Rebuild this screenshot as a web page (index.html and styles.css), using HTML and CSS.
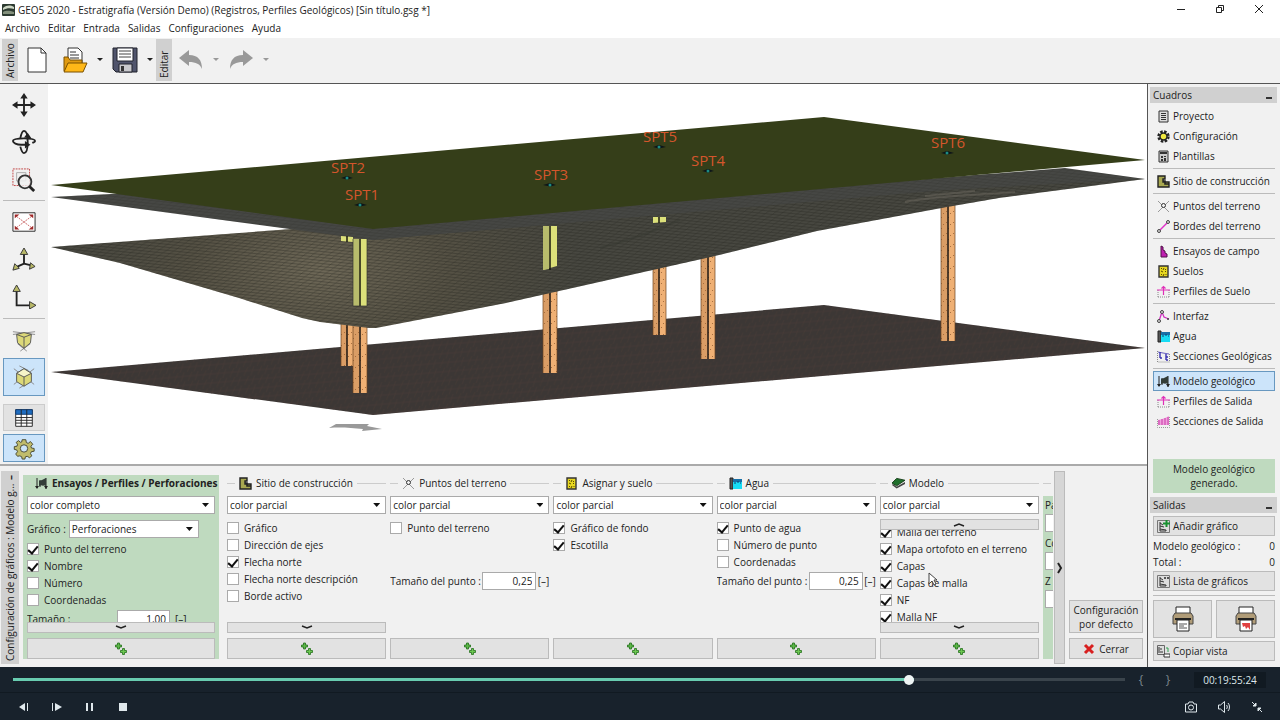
FILE: index.html
```html
<!DOCTYPE html>
<html lang="es">
<head>
    <meta charset="UTF-8">
    <meta name="viewport" content="width=device-width, initial-scale=1.0">
    <title>GEO5 2020 - Estratigrafía</title>
    <link rel="stylesheet" href="styles.css">
</head>
<body>
    <!-- shared icons -->
    <svg class="defs" aria-hidden="true">
        <symbol id="i-add" viewBox="0 0 14 14">
            <path d="M3.500 1h2v2h2v2h-2v2h-2V5h-2V3h2z" fill="#5cb848" stroke="#23701c" stroke-width=".800"/>
            <path d="M8.500 6.500h2v2h2v2h-2v2h-2v-2h-2v-2h2z" fill="#6cc850" stroke="#23701c" stroke-width=".800"/>
        </symbol>
        <symbol id="i-site" viewBox="0 0 13 13">
            <path d="M1 1h7v3H6v3h6v5H1z" fill="#a8a850" stroke="#222" stroke-width="1.4"/>
            <path d="M6 6h2v3h4" fill="none" stroke="#222" stroke-width="1.6"/>
        </symbol>
        <symbol id="i-points" viewBox="0 0 13 13">
            <path d="M1 1l11 11M12 1L1 12" stroke="#999"/>
            <circle cx="6.500" cy="5.500" r="2" fill="#f1f1f1" stroke="#333"/>
        </symbol>
        <symbol id="i-soil" viewBox="0 0 13 13">
            <path d="M2 1h9v11H2z" fill="#e8d820" stroke="#333" stroke-width="1.400"/>
            <path d="M4 3l1 1M7 3l-1 2M9 4l-1 1M4 6l2 1M8 7l1-1M4 9l1 1M7 9l-1 2M9 9v1" stroke="#5a4a00"/>
        </symbol>
        <symbol id="i-water" viewBox="0 0 13 13">
            <path d="M1 1h3v11H1z" fill="#555" stroke="#222"/>
            <path d="M4 5h9v7H4z" fill="#18dcf4"/>
            <path d="M4 2h9v3H4z" fill="#1870a8"/>
            <path d="M5 6h2M8 5h2M11 6h1" stroke="#0a3c70"/>
        </symbol>
        <symbol id="i-model" viewBox="0 0 13 13">
            <path d="M2 1v10M5 3v7M8 3v6M11 1v11" stroke="#222"/>
            <path d="M4 4l3-1 4-2v8L8 8 4 9z" fill="#333d38"/>
            <path d="M0 9l2 3 2-3M9 9l2 3 2-3" fill="#222"/>
        </symbol>
        <symbol id="i-graph" viewBox="0 0 13 13">
            <path d="M.5.500h12v12H.500z" fill="#ddd" stroke="#777"/>
            <path d="M3 2v9M3 3l3 2M3 6l4 1M3 9l6 1v1H3" stroke="#333" fill="none"/>
        </symbol>
        <symbol id="i-profile" viewBox="0 0 13 13">
            <path d="M1 12V4M12 12V4M1 12h11" stroke="#888" stroke-dasharray="1 1" fill="none"/>
            <path d="M0 5h13M6.500 2v8M4.500 3.500l2-2 2 2" stroke="#e030b8" fill="none" stroke-width="1.200"/>
        </symbol>
        <symbol id="i-printer" viewBox="0 0 22 26">
            <path d="M4 1h14v8H4z" fill="#fff" stroke="#222"/>
            <path d="M3 7h16l2 3v8H1v-8z" fill="#b09c78" stroke="#444"/>
            <path d="M3 12h16v2H3z" fill="#222"/>
            <path d="M5 14h12v11H5z" fill="#fff" stroke="#222"/>
        </symbol>
    </svg>

    <header class="titlebar">
        <svg class="app-icon" viewBox="0 0 13 12">
            <rect width="13" height="12" rx="1" fill="#2c3a30"/>
            <path d="M1 4c4-3 7-3 11-1v2c-4-1-7-1-11 1z" fill="#cdd6c4"/>
            <path d="M1 8c4-2 7-1 11 0v2H1z" fill="#83907c"/>
        </svg>
        <h1>GEO5 2020 - Estratigrafía (Versión Demo) (Registros, Perfiles Geológicos) [Sin título.gsg *]</h1>
        <div class="window-buttons">
            <button aria-label="Minimizar"><svg viewBox="0 0 10 10"><path d="M1 5.500h8"/></svg></button>
            <button aria-label="Restaurar"><svg viewBox="0 0 10 10"><path d="M1.500 3.500h5v5h-5zM3.500 3V1.500h5v5H7"/></svg></button>
            <button aria-label="Cerrar ventana"><svg viewBox="0 0 10 10"><path d="M1 1l8 8M9 1L1 9"/></svg></button>
        </div>
    </header>

    <nav class="menu">
        <a href="#">Archivo</a>
        <a href="#">Editar</a>
        <a href="#">Entrada</a>
        <a href="#">Salidas</a>
        <a href="#">Configuraciones</a>
        <a href="#">Ayuda</a>
    </nav>

    <div class="toolbar">
        <span class="tool-tab">Archivo</span>
        <button class="tool" aria-label="Nuevo">
            <svg width="20" height="26" viewBox="0 0 20 26"><path d="M1 1h13l5 5v19H1z" fill="#fff" stroke="#333"/><path d="M14 1v5h5" fill="none" stroke="#333"/></svg>
        </button>
        <button class="tool" aria-label="Abrir">
            <svg width="25" height="26" viewBox="0 0 25 26">
                <path d="M5 1h10l4 4v14H5z" fill="#fff" stroke="#333"/>
                <path d="M7 5h6M7 8h9M7 11h9" stroke="#333"/>
                <path d="M1 24V10h4l2 3h12v3" fill="#e09a10" stroke="#7a5000"/>
                <path d="M1 25l4-9h19l-4 9z" fill="#ffb818" stroke="#7a5000"/>
            </svg>
        </button>
        <button class="drop" aria-label="Abrir reciente"></button>
        <button class="tool" aria-label="Guardar">
            <svg width="26" height="26" viewBox="0 0 26 26">
                <path d="M1 1h24v24H4l-3-3z" fill="#50546c" stroke="#20222c"/>
                <path d="M5 1h16v13H5z" fill="#fff" stroke="#20222c"/>
                <path d="M7 4h12M7 7h12M7 10h12" stroke="#444"/>
                <path d="M7 17h13v8H7z" fill="#c8c8cc" stroke="#20222c"/>
                <path d="M9 19h3v5H9z" fill="#333"/>
            </svg>
        </button>
        <button class="drop" aria-label="Guardar como"></button>
        <span class="tool-tab">Editar</span>
        <button class="tool" aria-label="Deshacer">
            <svg width="26" height="20" viewBox="0 0 26 20"><path d="M1 8l10-8v5c9 0 13 5 13 14-2-5-6-7-13-7v4z" fill="#999"/></svg>
        </button>
        <button class="drop off" aria-label="Historial deshacer"></button>
        <button class="tool" aria-label="Rehacer">
            <svg width="26" height="20" viewBox="0 0 26 20"><path d="M25 8L15 0v5C6 5 2 10 2 19c2-5 6-7 13-7v4z" fill="#999"/></svg>
        </button>
        <button class="drop off" aria-label="Historial rehacer"></button>
    </div>

    <main class="workspace">
        <div class="left">
            <section class="stage">
                <div class="view-tools">
                    <button aria-label="Mover">
                        <svg viewBox="0 0 26 26"><path d="M13 3v20M3 13h20" stroke="#222" stroke-width="2"/><path d="M13 0l4 6H9zM13 26l-4-6h8zM0 13l6-4v8zM26 13l-6 4V9z" fill="#222"/></svg>
                    </button>
                    <button aria-label="Girar">
                        <svg viewBox="0 0 26 26"><path d="M9 9C10 4 11 1 13 1c3 0 4 6 4 12s-1 12-4 12c-2 0-3-3-4-7" fill="none" stroke="#222" stroke-width="2"/><path d="M22 14c2-1 3-1 3-2 0-2-5-3-12-3S1 10 1 12s4 4 9 4h6" fill="none" stroke="#222" stroke-width="2"/><path d="M14 12l6 4-6 4zM13 8l4-5 4 6z" fill="#222"/></svg>
                    </button>
                    <button aria-label="Zoom">
                        <svg viewBox="0 0 26 26"><path d="M1 1h18v18H1z" fill="none" stroke="#c04040" stroke-dasharray="2 1"/><path d="M5 5h10v9H5z" fill="none" stroke="#aaa"/><circle cx="14" cy="15" r="7" fill="#f1f1f1" fill-opacity=".8" stroke="#333" stroke-width="2"/><path d="M19 20l5 5" stroke="#222" stroke-width="3"/></svg>
                    </button>
                    <hr>
                    <button aria-label="Ajustar vista">
                        <svg viewBox="0 0 26 26"><path d="M1 3h24v20H1z" fill="#fff" stroke="#222"/><path d="M5 7l16 12M21 7L5 19" stroke="#c86060" stroke-dasharray="2 1"/><path d="M3 5h5L3 9zM23 5v4l-5-4zM3 21v-4l5 4zM23 21h-5l5-4z" fill="#a02828"/></svg>
                    </button>
                    <button aria-label="Vista 3D">
                        <svg viewBox="0 0 26 26"><path d="M13 17V5M13 17l9 2M13 17l-9 4" stroke="#222" stroke-width="2"/><path d="M13 0l4 7H9zM25 20l-6 3 1-7zM1 24l2-7 5 5z" fill="#b8b868" stroke="#333"/></svg>
                    </button>
                    <button aria-label="Vista en planta">
                        <svg viewBox="0 0 26 26"><path d="M5 4v18h16" fill="none" stroke="#222" stroke-width="2"/><path d="M5 0l4 7H1zM26 22l-7 4v-8z" fill="#b8b868" stroke="#333"/></svg>
                    </button>
                    <hr>
                    <button aria-label="Perspectiva">
                        <svg viewBox="0 0 26 26"><path d="M1 4l24 3M1 7l24-3M6 17l10 8M20 17L9 25" stroke="#888"/><path d="M5 7l8-2 8 2-1 9-7 6-7-6z" fill="#dcd878" stroke="#555"/><path d="M5 7l8 3 8-3M13 10v12" fill="none" stroke="#555"/></svg>
                    </button>
                    <button class="on tall" aria-label="Axonometría">
                        <svg viewBox="0 0 26 26"><path d="M2 4l22 17M24 4L2 21M8 1l10 5M8 25l10-6" stroke="#888"/><path d="M5 9l8-5 8 5v9l-8 5-8-5z" fill="#dcd878" stroke="#555"/><path d="M5 9l8-5 8 5-8 4z" fill="#f6f4c8" stroke="#555"/><path d="M13 13v10" stroke="#555"/></svg>
                    </button>
                    <button class="boxed" aria-label="Tabla">
                        <svg viewBox="0 0 26 26"><path d="M4 4h18v18H4z" fill="#fff" stroke="#222"/><path d="M4 4h18v5H4z" fill="#1e6cc0" stroke="#123c70"/><path d="M4 12.500h18M4 15.500h18M4 18.500h18M10 4v18M16 4v18" stroke="#222"/></svg>
                    </button>
                    <button class="on" aria-label="Configuración de gráficos">
                        <svg viewBox="0 0 26 26"><path d="M11 4h4l.500 3 2 1 2.500-2 2.500 3-2 2 .500 2 3 .500v3l-3 .500-1 2 1.500 2.500-2.500 2-2.500-1.500-2 .500-.500 2.500h-3l-.500-2.500-2-1L6 22l-2-2.500 2-2.500-1-2-2.500-.500v-3L5.500 11l.500-2-1.500-2L7 5l2.500 2 1-.500z" fill="#c0bc6c" stroke="#44442c"/><circle cx="13" cy="13.500" r="4" fill="#cce4fa" stroke="#44442c"/></svg>
                    </button>
                </div>

                <svg class="scene" viewBox="49 84 1098 380" preserveAspectRatio="xMaxYMid meet" role="img" aria-label="Modelo geológico">
                    <defs>
                        <pattern id="mesh" width="14" height="6" patternUnits="userSpaceOnUse" patternTransform="rotate(6)">
                            <path d="M0 .500h14M0 3.500h14M0 6l7-6M7 6l7-6" stroke="#242620" stroke-opacity=".5" stroke-width=".700"/>
                        </pattern>
                        <pattern id="rough" width="14" height="9" patternUnits="userSpaceOnUse" patternTransform="rotate(-5)">
                            <path d="M0 9L5 0M7 9l4-9M0 4h14" stroke="#4a3c36" stroke-width=".500"/>
                        </pattern>
                        <pattern id="sand" width="7" height="11" patternUnits="userSpaceOnUse">
                            <rect width="7" height="11" fill="#efb074"/>
                            <path d="M1 2.500h1M5 4.500h1M3 8.500h1" stroke="#a87040"/>
                        </pattern>
                        <radialGradient id="bowl" gradientUnits="userSpaceOnUse" cx="320" cy="270" r="260" gradientTransform="translate(0 130) scale(1 .520)">
                            <stop offset="0" stop-color="#6e6857"/>
                            <stop offset=".5" stop-color="#555144"/>
                            <stop offset="1" stop-color="#474740"/>
                        </radialGradient>
                    </defs>
                    <!-- base surface -->
                    <path d="M51 372L824 305l321 43-772 67z" fill="#3c3735"/>
                    <path d="M51 372L824 305l321 43-772 67z" fill="url(#rough)"/>
                    <!-- lower part of the boreholes -->
                    <g fill="url(#sand)">
                        <path d="M341 310h12v56h-12zM353 310h14v83h-14zM543 280h14v93h-14zM653 255h13v80h-13zM701 245h14v114h-14zM941 195h14v146h-14z"/>
                    </g>
                    <path d="M341 310h6v56h-6zM353 310h6v83h-6zM543 280h6v93h-6zM653 255h6v80h-6zM701 245h6v114h-6zM941 195h6v146h-6z" fill="#9c6438" fill-opacity=".25"/>
                    <path d="M347 310v56M360 310v83M550 280v93M659 255v80M708 245v114M948 195v146" stroke="#1c1410" stroke-width="1.500"/>
                    <path d="M341 310v56M353 310v83M367 310v83M543 280v93M557 280v93M653 255v80M666 255v80M701 245v114M715 245v114M941 195v146M955 195v146" stroke="#6a4220" stroke-width=".700"/>
                    <!-- bowl layer -->
                    <path d="M51 247L292 229l700-55 153 5-146 19-52 9-130 24-102 25-209 47-130 25h-7l-49-6-18-4-63-20-119-35z" fill="url(#bowl)"/>
                    <path d="M51 247L292 229l700-55 153 5-146 19-52 9-130 24-102 25-209 47-130 25h-7l-49-6-18-4-63-20-119-35z" fill="url(#mesh)"/>
                    <path d="M905 202c30-6 70-7 110-10M925 196l50-5" fill="none" stroke="#777468" stroke-width="2" stroke-opacity=".4"/>
                    <path d="M600 248c30-8 50-15 80-28" fill="none" stroke="#34362f" stroke-opacity=".4" stroke-width="2"/>
                    <!-- upper layer and terrain -->
                    <path d="M51 197l80-4 250 30 684-55 80 11-200 11-573 50z" fill="#464744"/>
                    <path d="M51 197l80-4 250 30 684-55 80 11-200 11-573 50z" fill="url(#mesh)" fill-opacity=".5"/>
                    <path d="M51 185L824 117l321 43-772 69z" fill="#353e19"/>
                    <!-- upper part of the boreholes -->
                    <path d="M341 236l12 1v5l-12-1zM353 239h14v67h-14zM543 226h14v40l-14 4zM653 217h13v5l-13 1z" fill="#dce07a"/>
                    <path d="M353 239h6v67h-6zM543 226h6v43l-6 1z" fill="#b8bc6c"/>
                    <path d="M347 236v6M360 239v67M550 226v44M659 217v6" stroke="#181810" stroke-width="1.500"/>
                    <path d="M353 239v67h14v-67" fill="none" stroke="#333" stroke-width=".700"/>
                    <g fill="#0c1418">
                        <path d="M341 178l6-2 6 2-6 1.500zM354 205l6-2 7 2-7 1.500zM543 185l7-2 6 2-6 1.500zM653 147l6-2 7 2-7 1.500zM702 171l6-2 6 2-6 1.500zM941 153l6-2 7 2-7 1.500z"/>
                    </g>
                    <g fill="#1c8c84">
                        <circle cx="347" cy="178" r="1.500"/><circle cx="360" cy="205" r="1.500"/><circle cx="550" cy="185" r="1.500"/>
                        <circle cx="659" cy="147" r="1.500"/><circle cx="708" cy="171" r="1.500"/><circle cx="947" cy="153" r="1.500"/>
                    </g>
                    <g class="labels">
                        <text x="348" y="173">SPT2</text>
                        <text x="362" y="200">SPT1</text>
                        <text x="551" y="180">SPT3</text>
                        <text x="660" y="142">SPT5</text>
                        <text x="708" y="166">SPT4</text>
                        <text x="948" y="148">SPT6</text>
                    </g>
                    <!-- north arrow -->
                    <path d="M329 428l7-4 33 0-2 2 15 3-20 2 1-2c-12-1-22-2-34-1z" fill="#999"/>
                </svg>
            </section>

            <section class="settings">
                <div class="side-tab"><span>Configuración de gráficos : Modelo g...</span><b>–</b></div>
                <div class="groups">
                    <fieldset class="group active">
                        <div class="head"><svg><use href="#i-model"/></svg><span>Ensayos / Perfiles / Perforaciones</span></div>
                        <div class="combo"><select aria-label="Color ensayos"><option>color completo</option></select></div>
                        <div class="list">
                            <div class="row graph-row"><label for="graph">Gráfico :</label><div class="combo"><select id="graph"><option>Perforaciones</option></select></div></div>
                            <label class="check"><input type="checkbox" checked>Punto del terreno</label>
                            <label class="check"><input type="checkbox" checked>Nombre</label>
                            <label class="check"><input type="checkbox">Número</label>
                            <label class="check"><input type="checkbox">Coordenadas</label>
                            <div class="row size-row"><label for="size1">Tamaño :</label><input id="size1" type="text" value="1,00"><span>[–]</span></div>
                        </div>
                        <button class="scroll" aria-label="Bajar"><svg viewBox="0 0 12 5"><path d="M1 1l5 2 5-2"/></svg></button>
                        <button class="add" aria-label="Añadir"><svg><use href="#i-add"/></svg></button>
                    </fieldset>

                    <fieldset class="group">
                        <div class="head"><svg><use href="#i-site"/></svg><span>Sitio de construcción</span></div>
                        <div class="combo"><select aria-label="Color sitio"><option>color parcial</option></select></div>
                        <div class="list">
                            <label class="check"><input type="checkbox">Gráfico</label>
                            <label class="check"><input type="checkbox">Dirección de ejes</label>
                            <label class="check"><input type="checkbox" checked>Flecha norte</label>
                            <label class="check"><input type="checkbox">Flecha norte descripción</label>
                            <label class="check"><input type="checkbox">Borde activo</label>
                        </div>
                        <button class="scroll" aria-label="Bajar"><svg viewBox="0 0 12 5"><path d="M1 1l5 2 5-2"/></svg></button>
                        <button class="add" aria-label="Añadir"><svg><use href="#i-add"/></svg></button>
                    </fieldset>

                    <fieldset class="group">
                        <div class="head"><svg><use href="#i-points"/></svg><span>Puntos del terreno</span></div>
                        <div class="combo"><select aria-label="Color puntos"><option>color parcial</option></select></div>
                        <div class="list spaced">
                            <label class="check"><input type="checkbox">Punto del terreno</label>
                            <div class="row point-row"><label for="size2">Tamaño del punto :</label><input id="size2" type="text" value="0,25"><span>[–]</span></div>
                        </div>
                        <button class="add" aria-label="Añadir"><svg><use href="#i-add"/></svg></button>
                    </fieldset>

                    <fieldset class="group">
                        <div class="head"><svg><use href="#i-soil"/></svg><span>Asignar y suelo</span></div>
                        <div class="combo"><select aria-label="Color suelo"><option>color parcial</option></select></div>
                        <div class="list">
                            <label class="check"><input type="checkbox" checked>Gráfico de fondo</label>
                            <label class="check"><input type="checkbox" checked>Escotilla</label>
                        </div>
                        <button class="add" aria-label="Añadir"><svg><use href="#i-add"/></svg></button>
                    </fieldset>

                    <fieldset class="group">
                        <div class="head"><svg><use href="#i-water"/></svg><span>Agua</span></div>
                        <div class="combo"><select aria-label="Color agua"><option>color parcial</option></select></div>
                        <div class="list spaced">
                            <label class="check"><input type="checkbox" checked>Punto de agua</label>
                            <label class="check"><input type="checkbox">Número de punto</label>
                            <label class="check"><input type="checkbox">Coordenadas</label>
                            <div class="row point-row"><label for="size3">Tamaño del punto :</label><input id="size3" type="text" value="0,25"><span>[–]</span></div>
                        </div>
                        <button class="add" aria-label="Añadir"><svg><use href="#i-add"/></svg></button>
                    </fieldset>

                    <fieldset class="group model">
                        <div class="head"><svg viewBox="0 0 14 13"><path d="M0 8l5 4 9-5V5L5 10 1 7z" fill="#444"/><path d="M5 1l9 2-9 6-5-3z" fill="#20702c" stroke="#143c18"/></svg><span>Modelo</span></div>
                        <div class="combo"><select aria-label="Color modelo"><option>color parcial</option></select></div>
                        <button class="scroll up" aria-label="Subir"><svg viewBox="0 0 12 5"><path d="M1 4l5-2 5 2"/></svg></button>
                        <div class="list scrolled">
                            <label class="check"><input type="checkbox" checked>Malla del terreno</label>
                            <label class="check"><input type="checkbox" checked>Mapa ortofoto en el terreno</label>
                            <label class="check"><input type="checkbox" checked>Capas</label>
                            <label class="check"><input type="checkbox" checked>Capas de malla</label>
                            <label class="check"><input type="checkbox" checked>NF</label>
                            <label class="check"><input type="checkbox" checked>Malla NF</label>
                        </div>
                        <button class="scroll" aria-label="Bajar"><svg viewBox="0 0 12 5"><path d="M1 1l5 2 5-2"/></svg></button>
                        <button class="add" aria-label="Añadir"><svg><use href="#i-add"/></svg></button>
                        <svg class="pointer" viewBox="0 0 10 14"><path d="M1 1v11l3-3 2 4 2-1-2-4h3z"/></svg>
                    </fieldset>

                    <div class="group peek">
                        <div class="head"></div>
                        <div class="peek-body">
                            <label for="p1">Pa</label><input id="p1" type="text">
                            <label for="p2">Co</label><input id="p2" type="text">
                            <label for="p3">Z</label><input id="p3" type="text">
                        </div>
                    </div>
                </div>
                <button class="next" aria-label="Siguiente"><svg viewBox="0 0 6 12"><path d="M1 1l3 5-3 5"/></svg></button>
                <div class="actions">
                    <button>Configuración<br>por defecto</button>
                    <button><svg viewBox="0 0 12 12"><path d="M2 2l8 8M10 2l-8 8" stroke="#d82020" stroke-width="3"/></svg>Cerrar</button>
                </div>
            </section>
        </div>

        <aside class="frames">
            <h2>Cuadros<b></b></h2>
            <nav>
                <a href="#"><svg viewBox="0 0 13 13"><path d="M2 1h9v11H2z" fill="#ddd" stroke="#333"/><path d="M4 3.500h5M4 5.500h5M4 7.500h5M4 9.500h5" stroke="#333"/></svg>Proyecto</a>
                <a href="#"><svg viewBox="0 0 13 13"><circle cx="6.500" cy="6.500" r="5" fill="none" stroke="#222" stroke-width="2.400" stroke-dasharray="2.500 1.430"/><circle cx="6.500" cy="6.500" r="3.500" fill="#f0e840" stroke="#222" stroke-width="1.500"/></svg>Configuración</a>
                <a href="#"><svg viewBox="0 0 13 13"><path d="M2 1h9v11H2z" fill="#ccc" stroke="#333"/><path d="M3 3h7" stroke="#333" stroke-width="2"/><path d="M4 6h2v2H4zM4 9h2v2H4zM7 6h2v1H7zM7 8h2v3H7z" fill="#333"/></svg>Plantillas</a>
                <hr>
                <a href="#"><svg><use href="#i-site"/></svg>Sitio de construcción</a>
                <hr>
                <a href="#"><svg><use href="#i-points"/></svg>Puntos del terreno</a>
                <a href="#"><svg viewBox="0 0 13 13"><path d="M2 11l9-9" stroke="#e030c8" stroke-width="1.500"/><circle cx="2" cy="11" r="1.500" fill="#ddd" stroke="#444"/><circle cx="11" cy="2" r="1.500" fill="#ddd" stroke="#444"/></svg>Bordes del terreno</a>
                <hr>
                <a href="#"><svg viewBox="0 0 13 13"><path d="M4 1v11h6V9L8 8V6L6 5V2z" fill="#c020b0" stroke="#501048"/></svg>Ensayos de campo</a>
                <a href="#"><svg><use href="#i-soil"/></svg>Suelos</a>
                <a href="#"><svg><use href="#i-profile"/></svg>Perfiles de Suelo</a>
                <hr>
                <a href="#"><svg viewBox="0 0 13 13"><path d="M2 11l3-9 2 5 5 2" fill="none" stroke="#d030c0" stroke-width="1.300"/><circle cx="2" cy="11" r="1.500" fill="#ddd" stroke="#444"/><circle cx="5" cy="2" r="1.500" fill="#ddd" stroke="#444"/><circle cx="11" cy="9" r="1" fill="#444"/></svg>Interfaz</a>
                <a href="#"><svg><use href="#i-water"/></svg>Agua</a>
                <a href="#"><svg viewBox="0 0 13 13"><path d="M.500 1v11h12V3" fill="none" stroke="#888" stroke-dasharray="1 1"/><path d="M1 2l5 1 6 1" stroke="#6860c0"/><path d="M3 2v6M3 8h2M9 4v6M9 7h2M9 10h2" stroke="#3830b0" stroke-width="1.400"/></svg>Secciones Geológicas</a>
                <hr>
                <a href="#" class="selected"><svg><use href="#i-model"/></svg>Modelo geológico</a>
                <a href="#"><svg><use href="#i-profile"/></svg>Perfiles de Salida</a>
                <a href="#"><svg viewBox="0 0 13 13"><path d="M.500 4v8.500h12V1" fill="none" stroke="#999" stroke-dasharray="1 1"/><path d="M1 5l4-1 3-1 4-2v9H1z" fill="#f0a0dc"/><path d="M2 5v5M5 4v6M8 3v7M11 2v8" stroke="#c838a8"/></svg>Secciones de Salida</a>
            </nav>

            <div class="outputs">
                <p class="status">Modelo geológico<br>generado.</p>
                <h2>Salidas<b></b></h2>
                <button class="wide"><svg viewBox="0 0 13 13"><use href="#i-graph"/><path d="M9.500 0v7M6 3.500h7" stroke="#189030" stroke-width="2"/></svg>Añadir gráfico</button>
                <div class="count"><span>Modelo geológico :</span><span>0</span></div>
                <div class="count"><span>Total :</span><span>0</span></div>
                <button class="wide"><svg viewBox="0 0 13 13"><use href="#i-graph"/><path d="M7 2h2v2H7zM10 2h2v2h-2z" fill="#555"/></svg>Lista de gráficos</button>
                <hr>
                <div class="print">
                    <button aria-label="Imprimir"><svg viewBox="0 0 22 26"><use href="#i-printer"/><path d="M7 18h8M7 20h5M7 22h8" stroke="#555"/></svg></button>
                    <button aria-label="Imprimir vista"><svg viewBox="0 0 22 26"><use href="#i-printer"/><path d="M7 17h8v7l-2-3-2 2-1-3-2 1z" fill="#e04040"/></svg></button>
                </div>
                <button class="wide"><svg viewBox="0 0 13 13"><path d="M.500.500h7v9h-7z" fill="#ddd" stroke="#666"/><path d="M2 2v6M3 4h2M3 7h3" stroke="#333"/><path d="M7 9h6v3H7z" fill="#fff" stroke="#333"/><path d="M9 3h2v4" fill="none" stroke="#30a050"/></svg>Copiar vista</button>
            </div>
        </aside>
    </main>

    <footer class="player">
        <div class="timeline">
            <input type="range" min="0" max="10000" value="8083" aria-label="Posición">
            <button aria-label="Marca inicial">{</button>
            <button aria-label="Marca final">}</button>
            <time>00:19:55:24</time>
        </div>
        <div class="controls">
            <button aria-label="Anterior"><svg viewBox="0 0 12 12"><path d="M7 2v8L1 6zM9 2h1v8H9z"/></svg></button>
            <button aria-label="Reproducir"><svg viewBox="0 0 12 12"><path d="M1 2h1v8H1zM4 2v8l7-4z"/></svg></button>
            <button aria-label="Pausa"><svg viewBox="0 0 12 12"><path d="M2 2h2v8H2zM7 2h2v8H7z"/></svg></button>
            <button aria-label="Detener"><svg viewBox="0 0 12 12"><path d="M2 2h8v8H2z"/></svg></button>
            <button class="first-right" aria-label="Captura"><svg class="line" viewBox="0 0 12 12"><path d="M.500 3h2.500l1-2h4l1 2h2.500v8H.500z"/><circle cx="6" cy="6.500" r="2.500"/></svg></button>
            <button aria-label="Volumen"><svg class="line" viewBox="0 0 12 12"><path d="M.500 4h2l4-3.500v11L2.500 8h-2zM8.500 4c1 1 1 3 0 4M10 2c2 2 2 6 0 8"/></svg></button>
            <button aria-label="Salir de pantalla completa"><svg class="line" viewBox="0 0 12 12"><path d="M1 1l4 4M11 11L7 7"/><path d="M5 2v3H2zM7 10V7h3z" fill="#dfe8ec"/></svg></button>
        </div>
    </footer>
</body>
</html>
```
FILE: styles.css
```css
* {
    box-sizing: border-box;
}
body {
    display: flex;
    flex-direction: column;
    height: 100vh;
    margin: 0;
    overflow: hidden;
    background-color: #f1f1f1;
    color: #222;
    font-family: "Open Sans", "Noto Sans", sans-serif;
    font-size: 10px;
    line-height: 16px;
}
button, select, input {
    margin: 0;
    padding: 0;
    font: inherit;
    color: inherit;
}
a {
    color: inherit;
    text-decoration: none;
}
svg {
    flex: none;
    fill: none;
}
hr {
    width: 100%;
    margin: 2px 0;
    border: 0;
    border-top: 1px solid #bbb;
}
.defs {
    position: absolute;
    width: 0;
    height: 0;
}

/* title and menu */
.titlebar {
    display: flex;
    align-items: center;
    height: 20px;
    padding-left: 2px;
    background-color: #fff;
}
.app-icon {
    width: 13px;
    height: 12px;
    margin-right: 3px;
}
.titlebar h1 {
    margin: 0;
    font-size: 10px;
    font-weight: normal;
}
.window-buttons {
    display: flex;
    margin-left: auto;
    padding-right: 2px;
}
.window-buttons button {
    width: 39px;
    height: 18px;
    border: 0;
    background: none;
}
.window-buttons svg {
    width: 10px;
    height: 10px;
    stroke: #222;
}
.menu {
    display: flex;
    gap: 8px;
    height: 18px;
    padding-left: 5px;
    background-color: #fff;
}

/* toolbar */
.toolbar {
    display: flex;
    align-items: center;
    height: 46px;
    padding: 0 2px 2px;
    border-bottom: 1px solid #555;
}
.tool-tab {
    width: 16px;
    height: 42px;
    background-color: #d0d0d0;
    writing-mode: vertical-rl;
    transform: rotate(180deg);
    text-align: left;
    padding-top: 3px;
}
.tool {
    display: flex;
    align-items: center;
    justify-content: center;
    width: 38px;
    height: 40px;
    border: 0;
    background: none;
}
.drop {
    width: 12px;
    height: 20px;
    border: 0;
    background: none;
}
.drop::after {
    content: "";
    display: block;
    width: 6px;
    height: 3px;
    margin: auto;
    background-color: #222;
    clip-path: polygon(0 0, 100% 0, 50% 100%);
}
.drop.off::after {
    background-color: #999;
}

/* work area */
.workspace {
    display: flex;
    flex: 1;
    min-height: 0;
}
.left {
    display: flex;
    flex: 1;
    flex-direction: column;
    min-width: 0;
}
.stage {
    display: flex;
    flex: 1;
    min-height: 0;
    background-color: #fff;
}
.view-tools {
    display: flex;
    flex-direction: column;
    align-items: center;
    width: 48px;
    padding: 2px 3px;
    background-color: #f1f1f1;
}
.view-tools button {
    display: flex;
    align-items: center;
    justify-content: center;
    width: 42px;
    height: 38px;
    border: 1px solid transparent;
    background: none;
}
.view-tools svg {
    width: 24px;
    height: 24px;
}
.view-tools button.boxed {
    height: 28px;
    margin: 8px 0 3px;
    border-color: #ccc;
    background-color: #e2e2e2;
}
.view-tools button.on {
    height: 28px;
    border-color: #6898c0;
    background-color: #cce4fa;
}
.view-tools button.tall {
    height: 38px;
}
.scene {
    flex: 1;
    min-width: 0;
    height: 100%;
}
.labels {
    fill: #d4562c;
    font-size: 15px;
    text-anchor: middle;
}

/* drawing settings */
.settings {
    display: flex;
    height: 203px;
    padding: 5px 4px 3px 1px;
    border-top: 2px solid #aaa;
}
.side-tab {
    display: flex;
    align-items: center;
    justify-content: space-between;
    width: 18px;
    padding: 3px 0 4px;
    background-color: #d0d0d0;
    writing-mode: vertical-rl;
    transform: rotate(180deg);
    white-space: nowrap;
}
.groups {
    display: flex;
    flex: 1;
    gap: 4px;
    min-width: 0;
    margin-left: 4px;
    padding: 4px 0 5px;
}
.group {
    position: relative;
    display: flex;
    flex: 1;
    flex-direction: column;
    min-width: 0;
    margin: 0;
    padding: 0;
    border: 0;
}
.group.active {
    flex: 0 0 196px;
    margin-right: 4px;
    padding: 0 4px;
    background-color: #bfdabf;
}
.active .head {
    font-weight: bold;
}
.head {
    display: flex;
    align-items: center;
    gap: 4px;
    height: 16px;
    margin-bottom: 5px;
    white-space: nowrap;
}
.head::before, .head::after {
    content: "";
    flex: 1;
    border-top: 1px solid #ccc;
}
.head::before {
    flex: 0 0 8px;
}
.head svg {
    width: 13px;
    height: 13px;
}
.active .head::before {
    flex: 0 0 4px;
}
.combo {
    position: relative;
    height: 18px;
    border: 1px solid #aaa;
    background-color: #fff;
}
.combo::after {
    content: "";
    position: absolute;
    top: 6px;
    right: 5px;
    width: 7px;
    height: 4px;
    background-color: #111;
    clip-path: polygon(0 0, 100% 0, 50% 100%);
    pointer-events: none;
}
.combo select {
    display: block;
    width: 100%;
    height: 16px;
    padding-left: 2px;
    border: 0;
    background: none;
    appearance: none;
}
.list {
    flex: 1;
    min-height: 0;
    padding-top: 5px;
    overflow: hidden;
}
.check {
    display: flex;
    align-items: center;
    gap: 5px;
    height: 17px;
    white-space: nowrap;
}
.check input {
    flex: none;
    width: 12px;
    height: 12px;
    border: 1px solid #aaa;
    background-color: #fff;
    appearance: none;
}
.check input:checked::after {
    content: "";
    display: block;
    width: 4px;
    height: 8px;
    margin: 0 auto;
    border: solid #111;
    border-width: 0 2px 2px 0;
    transform: rotate(40deg);
}
.row {
    display: flex;
    align-items: center;
    white-space: nowrap;
}
.row input {
    height: 18px;
    padding-right: 3px;
    border: 1px solid #aaa;
    background-color: #fff;
    text-align: right;
}
.graph-row {
    gap: 3px;
    margin: 1px 0 2px;
}
.graph-row .combo {
    width: 130px;
}
.size-row {
    margin-top: 2px;
}
.size-row label {
    width: 90px;
}
.size-row input {
    width: 53px;
    margin-right: 5px;
}
.spaced {
    display: flex;
    flex-direction: column;
}
.point-row {
    justify-content: space-between;
    margin-top: auto;
    margin-bottom: 48px;
}
.point-row input {
    width: 54px;
}
.scroll, .add, .next, .actions button, .outputs button {
    display: flex;
    align-items: center;
    justify-content: center;
    border: 1px solid #bbb;
    background-color: #e2e2e2;
}
.scroll {
    height: 11px;
    margin-bottom: 5px;
}
.scroll svg {
    width: 12px;
    height: 5px;
    stroke: #222;
    stroke-width: 1.5;
}
.scroll.up {
    margin: 5px 0 0;
}
.scrolled {
    padding: 0;
}
.scrolled .check:first-child {
    margin-top: -7px;
}
.add {
    height: 21px;
}
.add svg {
    width: 14px;
    height: 14px;
}
.pointer {
    position: absolute;
    top: 97px;
    left: 48px;
    width: 10px;
    height: 14px;
    fill: #fff;
    stroke: #444;
}
.group.peek {
    flex: 0 0 10px;
    overflow: hidden;
}
.peek-body {
    flex: 1;
    width: 60px;
    padding: 1px 2px;
    background-color: #bfdabf;
}
.peek-body label {
    display: block;
    height: 17px;
}
.peek-body input {
    display: block;
    width: 56px;
    height: 18px;
    margin-bottom: 3px;
    border: 1px solid #aaa;
}
.next {
    width: 11px;
    margin-left: 1px;
    background-color: #d6d6d6;
}
.next svg {
    width: 6px;
    height: 12px;
    stroke: #222;
    stroke-width: 2;
}
.actions {
    display: flex;
    flex-direction: column;
    justify-content: flex-end;
    gap: 5px;
    width: 74px;
    margin-left: 4px;
    padding-bottom: 5px;
}
.actions button {
    min-height: 21px;
    gap: 4px;
    line-height: 14px;
    white-space: nowrap;
}
.actions button:first-child {
    height: 33px;
}
.actions svg {
    width: 12px;
    height: 12px;
}

/* right column */
.frames {
    display: flex;
    flex-direction: column;
    width: 133px;
    padding: 3px 3px 4px 2px;
    border-left: 1px solid #555;
}
.frames h2 {
    display: flex;
    justify-content: space-between;
    height: 16px;
    margin: 0;
    padding: 0 5px 0 3px;
    background-color: #d0d0d0;
    font-size: 10px;
    font-weight: normal;
}
.frames h2 b {
    width: 6px;
    height: 12px;
    border-bottom: 2px solid #333;
}
.frames nav {
    padding: 3px 2px 0 3px;
}
.frames nav a {
    display: flex;
    align-items: center;
    gap: 3px;
    height: 20px;
    padding-left: 3px;
    border: 1px solid transparent;
    white-space: nowrap;
}
.frames nav a.selected {
    border-color: #6898c0;
    background-color: #cce4fa;
}
.frames svg {
    width: 13px;
    height: 13px;
}
.outputs {
    display: flex;
    flex-direction: column;
    margin-top: auto;
}
.outputs h2 {
    margin-bottom: 2px;
}
.outputs .status {
    margin: 0 2px 4px 3px;
    padding: 3px 0;
    background-color: #bfdabf;
    line-height: 14px;
    text-align: center;
}
.outputs .wide {
    justify-content: flex-start;
    gap: 3px;
    height: 20px;
    margin: 1px 2px 2px 3px;
    padding-left: 3px;
}
.outputs hr {
    width: auto;
    margin: 2px 2px 4px 3px;
}
.count {
    display: flex;
    justify-content: space-between;
    margin: 0 2px 0 3px;
}
.print {
    display: flex;
    gap: 4px;
    margin: 0 2px 2px 3px;
}
.print button {
    flex: 1;
    height: 38px;
}
.print svg {
    width: 22px;
    height: 26px;
}

/* video controls */
.player {
    height: 53px;
    background-color: #18222c;
    color: #dfe8ec;
}
.timeline {
    display: flex;
    align-items: center;
    height: 26px;
    padding: 0 14px 0 13px;
    border-bottom: 1px solid #111a22;
}
.timeline input {
    flex: 1;
    height: 10px;
    margin-right: 8px;
    background: linear-gradient(to right, #68ccb0 81%, #3a444c 81%) center / 100% 3px no-repeat;
    appearance: none;
}
.timeline input::-webkit-slider-thumb {
    width: 10px;
    height: 10px;
    border-radius: 50%;
    background-color: #eef4f4;
    appearance: none;
}
.timeline button {
    width: 16px;
    margin-right: 11px;
    border: 0;
    background: none;
    color: #7c868c;
    font-size: 12px;
}
.timeline time {
    width: 72px;
    margin-left: 7px;
    background-color: #111a22;
    text-align: center;
}
.controls {
    display: flex;
    align-items: center;
    height: 27px;
    padding: 0 7px;
}
.controls button {
    display: flex;
    justify-content: center;
    width: 33px;
    border: 0;
    background: none;
}
.controls svg {
    width: 12px;
    height: 12px;
    fill: #dfe8ec;
}
.controls svg.line {
    fill: none;
    stroke: #dfe8ec;
}
.controls .first-right {
    margin-left: auto;
}
```
